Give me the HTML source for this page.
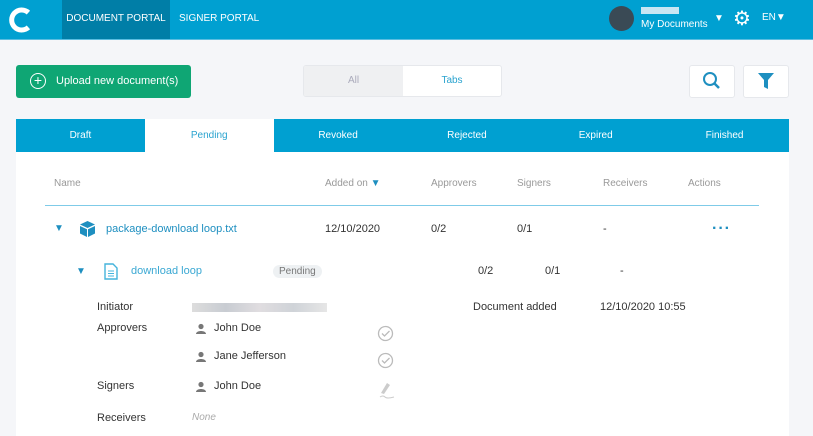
<!DOCTYPE html>
<html><head><style>
*{box-sizing:border-box;margin:0;padding:0}
body{width:813px;height:436px;overflow:hidden;background:#f5f6f9;font-family:"Liberation Sans",sans-serif;font-size:11px;color:#333;position:relative}
.abs{position:absolute}
.hdr{left:0;top:0;width:813px;height:40px;background:#00a0d1;border-bottom:1px solid #5bbde0}
.nav{color:#fff;font-size:10px;top:0;height:39px;line-height:37px}
.btn{background:#fff;border:1px solid #e6e8ec;border-radius:3px}
.tabs{left:16px;top:119px;width:773px;height:33px;background:#00a0d1;display:flex}
.tabs div{flex:1;color:#fff;text-align:center;line-height:33px;font-size:10px}
.tabs .on{background:#fff;color:#2aa3cf}
.panel{left:16px;top:152px;width:773px;height:284px;background:#fff}
.th{color:#999;font-size:10px;top:178px}
.blue{color:#1e8fc0}
.g{color:#333}
</style></head><body>
<div class="abs hdr"></div>
<svg class="abs" style="left:9px;top:4px" width="24" height="32" viewBox="0 0 24 32"><path d="M19.4 8.6 A10 10 0 1 0 19.4 23.4" fill="none" stroke="#fff" stroke-width="5"/></svg>
<div class="abs nav" style="left:62px;width:108px;background:#007ea7;text-align:center">DOCUMENT PORTAL</div>
<div class="abs nav" style="left:179px">SIGNER PORTAL</div>
<div class="abs" style="left:609px;top:6px;width:25px;height:25px;border-radius:50%;background:#3a4a55"></div>
<div class="abs" style="left:641px;top:7px;width:38px;height:7px;background:#c9e6f3"></div>
<div class="abs" style="left:641px;top:19px;color:#fff;font-size:10px">My Documents</div>
<div class="abs" style="left:714px;top:13px;color:#fff;font-size:10px">▼</div>
<div class="abs" style="left:733px;top:6px;color:#fff;font-size:20px">⚙</div>
<div class="abs" style="left:762px;top:12px;color:#fff;font-size:10px">EN▼</div>

<div class="abs" style="left:16px;top:65px;width:175px;height:33px;background:#0fa674;border-radius:3px;color:#fff;font-size:11px;line-height:33px;padding-left:40px">Upload new document(s)</div>
<div class="abs" style="left:30px;top:73px;width:16px;height:16px;border:1.5px solid #fff;border-radius:50%;color:#fff;text-align:center;line-height:13px;font-size:14px">+</div>
<div class="abs btn" style="left:303px;top:65px;width:199px;height:32px;display:flex;overflow:hidden">
<div style="width:99px;background:#eff0f2;color:#aab;text-align:center;line-height:30px;font-size:10px">All</div>
<div style="flex:1;color:#2aa3cf;text-align:center;line-height:30px;font-size:10px">Tabs</div></div>
<div class="abs btn" style="left:689px;top:65px;width:46px;height:33px"></div>
<svg class="abs" style="left:702px;top:71px" width="20" height="20"><circle cx="8" cy="8" r="6" fill="none" stroke="#1e8fc0" stroke-width="2"/><path d="M12 12l5 5" stroke="#1e8fc0" stroke-width="2.5"/></svg>
<div class="abs btn" style="left:743px;top:65px;width:46px;height:33px"></div>
<svg class="abs" style="left:757px;top:72px" width="18" height="18"><path d="M1 1h16l-6 7v9l-4-2v-7z" fill="#1e8fc0"/></svg>

<div class="abs tabs"><div>Draft</div><div class="on">Pending</div><div>Revoked</div><div>Rejected</div><div>Expired</div><div>Finished</div></div>
<div class="abs panel"></div>
<div class="abs th" style="left:54px">Name</div>
<div class="abs th" style="left:325px">Added on <span style="color:#1e8fc0">▼</span></div>
<div class="abs th" style="left:431px">Approvers</div>
<div class="abs th" style="left:517px">Signers</div>
<div class="abs th" style="left:603px">Receivers</div>
<div class="abs th" style="left:688px">Actions</div>
<div class="abs" style="left:45px;top:205px;width:714px;height:1px;background:#7fcbe8"></div>

<div class="abs blue" style="left:54px;top:223px;font-size:10px">▼</div>
<svg class="abs" style="left:79px;top:220px" width="17" height="18" viewBox="0 0 17 18"><path d="M8.5 1L16 4.5 8.5 8 1 4.5z" fill="#1e8fc0"/><path d="M1 6l7 3.3V17L1 13.5zM16 6L9 9.3V17l7-3.5z" fill="#1e8fc0"/></svg>
<div class="abs blue" style="left:106px;top:223px">package-download loop.txt</div>
<div class="abs g" style="left:325px;top:223px">12/10/2020</div>
<div class="abs g" style="left:431px;top:223px">0/2</div>
<div class="abs g" style="left:517px;top:223px">0/1</div>
<div class="abs g" style="left:603px;top:223px">-</div>
<div class="abs blue" style="left:712px;top:220px;font-size:16px;font-weight:bold;letter-spacing:1px">···</div>

<div class="abs blue" style="left:76px;top:266px;font-size:10px">▼</div>
<svg class="abs" style="left:104px;top:263px" width="14" height="17"><path d="M1 1h8l4 4v11H1z" fill="none" stroke="#45b4dc" stroke-width="1.4"/><path d="M4 8h6M4 10.5h6M4 13h6" stroke="#45b4dc"/></svg>
<div class="abs blue" style="left:131px;top:265px;color:#3aa8d3">download loop</div>
<div class="abs" style="left:273px;top:265px;background:#eef1f3;color:#777;border-radius:8px;padding:1px 6px;font-size:10px">Pending</div>
<div class="abs g" style="left:478px;top:265px">0/2</div>
<div class="abs g" style="left:545px;top:265px">0/1</div>
<div class="abs g" style="left:620px;top:265px">-</div>

<div class="abs g" style="left:97px;top:301px">Initiator</div>
<div class="abs" style="left:192px;top:303px;width:135px;height:9px;background:linear-gradient(90deg,#ddd,#c8ccd2,#e0dde0,#cfd3d8,#e6e6e6)"></div>
<div class="abs g" style="left:473px;top:301px">Document added</div>
<div class="abs g" style="left:600px;top:301px">12/10/2020 10:55</div>
<div class="abs g" style="left:97px;top:322px">Approvers</div>
<div class="abs g" style="left:97px;top:380px">Signers</div>
<div class="abs g" style="left:97px;top:412px">Receivers</div>
<div class="abs" style="left:192px;top:412px;color:#aaa;font-style:italic;font-size:10px">None</div>
<svg class="abs" style="left:195px;top:323px" width="12" height="12"><circle cx="6" cy="3.5" r="2.6" fill="#777"/><path d="M1 11c0-4 10-4 10 0z" fill="#777"/></svg>
<div class="abs g" style="left:214px;top:322px">John Doe</div>
<svg class="abs" style="left:195px;top:351px" width="12" height="12"><circle cx="6" cy="3.5" r="2.6" fill="#777"/><path d="M1 11c0-4 10-4 10 0z" fill="#777"/></svg>
<div class="abs g" style="left:214px;top:350px">Jane Jefferson</div>
<svg class="abs" style="left:195px;top:381px" width="12" height="12"><circle cx="6" cy="3.5" r="2.6" fill="#777"/><path d="M1 11c0-4 10-4 10 0z" fill="#777"/></svg>
<div class="abs g" style="left:214px;top:380px">John Doe</div>
<svg class="abs" style="left:377px;top:325px" width="17" height="17"><circle cx="8.5" cy="8.5" r="7" fill="none" stroke="#bbb" stroke-width="1.3"/><path d="M5 8.5l2.5 2.5 5-5" fill="none" stroke="#bbb" stroke-width="1.3"/></svg>
<svg class="abs" style="left:377px;top:352px" width="17" height="17"><circle cx="8.5" cy="8.5" r="7" fill="none" stroke="#bbb" stroke-width="1.3"/><path d="M5 8.5l2.5 2.5 5-5" fill="none" stroke="#bbb" stroke-width="1.3"/></svg>
<svg class="abs" style="left:378px;top:382px" width="18" height="18"><path d="M9 1l3 2-6 9-3-1z" fill="#ccc"/><path d="M2 15q3-2 5 0t9 0" fill="none" stroke="#ccc"/></svg>
</body></html>
